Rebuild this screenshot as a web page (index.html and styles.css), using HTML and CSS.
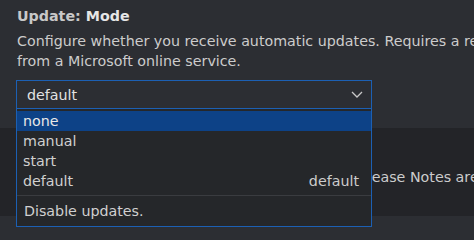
FILE: index.html
```html
<!DOCTYPE html>
<html>
<head>
<meta charset="utf-8">
<link rel="stylesheet" href="styles.css">
</head>
<body>
<div class="page">
  <div class="setting">
    <div class="title"><span class="cat">Update: </span><span class="name">Mode</span></div>
    <div class="desc">Configure whether you receive automatic updates. Requires a restart after change. The updates are fetched from a Microsoft online service.</div>
    <div class="select">
      <span class="value">default</span>
      <svg class="chevron" width="12" height="7" viewBox="0 0 12 7"><polyline points="1,1 6,6 11,1" fill="none" stroke="#c8c8c8" stroke-width="1.3"/></svg>
    </div>
  </div>
  <div class="setting focused">
    <div class="title"><span class="cat">Update: </span><span class="name">Show Release Notes</span></div>
    <div class="check-row">
      <span class="checkbox"></span>
      <span class="check-text">Show Release Notes after an update. The Release Notes are fetched from a Microsoft online service.</span>
    </div>
  </div>
  <div class="dropdown">
    <ul class="options">
      <li class="option selected">none</li>
      <li class="option">manual</li>
      <li class="option">start</li>
      <li class="option"><span>default</span><span class="detail">default</span></li>
    </ul>
    <div class="opt-desc">Disable updates.</div>
  </div>
</div>
</body>
</html>
```
FILE: styles.css
```css
html, body {
  margin: 0;
  padding: 0;
  background: #2c2e33;
}
.page {
  position: relative;
  width: 474px;
  height: 232px;
  overflow: hidden;
  font-family: "DejaVu Sans", sans-serif;
  font-size: 14.25px;
  line-height: 20px;
  color: #cccccc;
}
.setting {
  padding: 6px 0 0 17px;
  height: 122px;
  box-sizing: border-box;
}
.title {
  font-weight: bold;
  color: #c8c8c8;
}
.title .name {
  color: #e6e6e6;
}
.desc {
  width: 795px;
  margin-top: 5px;
}
.select {
  margin: 9px 0 0 -1px;
  width: 356px;
  height: 29px;
  box-sizing: border-box;
  border: 1px solid #1c60b4;
  background: #2c2e33;
  display: flex;
  align-items: center;
  justify-content: space-between;
  padding: 0 8px 0 10px;
  color: #e2e2e2;
}
.chevron {
  display: block;
}
.setting.focused {
  background: #232428;
  height: 88px;
  padding-top: 12px;
  margin-top: 6px;
}
.check-row {
  display: flex;
  align-items: center;
  margin-top: 7px;
  white-space: nowrap;
}
.checkbox {
  width: 16px;
  height: 16px;
  border: 1px solid #555;
  border-radius: 3px;
  margin-right: 15px;
  flex: none;
}
.dropdown {
  position: absolute;
  left: 16px;
  top: 109px;
  width: 356px;
  box-sizing: border-box;
  border: 1px solid #1c60b4;
  border-top: none;
  background: #25272a;
}
.options {
  list-style: none;
  margin: 0;
  padding: 2px 0 4px;
  border-bottom: 1px solid #3a3c40;
}
.option {
  height: 20px;
  padding: 0 12px 0 6px;
  display: flex;
  justify-content: space-between;
  color: #d0d0d0;
}
.option.selected {
  background: #0d4287;
  color: #e8e8e8;
}
.detail {
  color: #cccccc;
}
.opt-desc {
  padding: 5px 7px 5px;
  color: #d0d0d0;
}
```
